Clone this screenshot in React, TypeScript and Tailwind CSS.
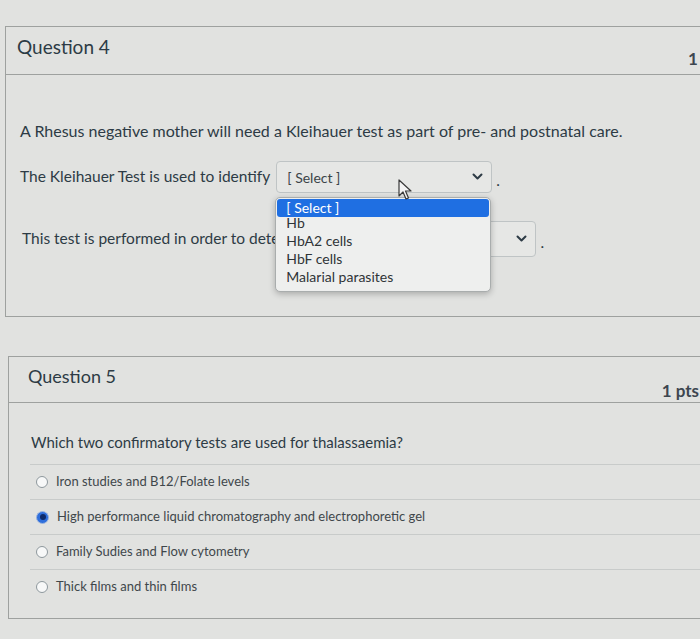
import React from "react";

const Chevron = () => (
  <svg width="11" height="8" viewBox="0 0 11 8" className="shrink-0">
    <path d="M1.5 1.5 L5.5 5.5 L9.5 1.5" fill="none" stroke="#2d3b45" strokeWidth="2" strokeLinecap="round" strokeLinejoin="round" />
  </svg>
);

const Cursor = () => (
  <svg width="16" height="22" viewBox="0 0 16 22">
    <path d="M1 1 L1 17 L5 13 L8 20 L10.5 19 L7.5 12 L13 12 Z" fill="#f4f4f4" stroke="#3a3a3a" strokeWidth="1.2" strokeLinejoin="round" />
  </svg>
);

const Radio = ({ checked }: { checked?: boolean }) =>
  checked ? (
    <span className="w-[13px] h-[13px] rounded-full bg-[#2f6fdc] border border-[#9fb6dc] flex items-center justify-center shrink-0">
      <span className="w-[6px] h-[6px] rounded-full bg-[#0e2b6b]" />
    </span>
  ) : (
    <span className="w-[12px] h-[12px] rounded-full bg-[#f7f8f8] border border-[#8e989d] shrink-0" />
  );

export default function App() {
  const options = [
    { t: "Iron studies and B12/Folate levels", c: false },
    { t: "High performance liquid chromatography and electrophoretic gel", c: true },
    { t: "Family Sudies and Flow cytometry", c: false },
    { t: "Thick films and thin films", c: false },
  ];
  return (
    <div className="w-[700px] h-[639px] overflow-hidden bg-[#e1e2e0] font-['Lato','Open_Sans',sans-serif] text-[#2d3b45]">
      <div className="pt-[26px]">
        {/* Question 4 */}
        <div className="ml-[5px] w-[740px] border border-[#9ea19f]">
          <div className="h-[48px] flex justify-between border-b border-[#9ea19f] pl-[11px] pr-[8px]">
            <div className="mt-[8px] text-[19px] leading-[24px]">Question 4</div>
            <div className="self-end mb-[4px] w-[48px] text-[17px] leading-[22px] font-bold text-[#3d4650]">1 pts</div>
          </div>
          <div className="pl-[14px] pb-[59px]">
            <p className="mt-[45px] text-[16px] leading-[22px]">
              A Rhesus negative mother will need a Kleihauer test as part of pre- and postnatal care.
            </p>
            <div className="mt-[19px] flex items-center text-[15.5px]">
              <span>The Kleihauer Test is used to identify</span>
              <div className="relative ml-[6px]">
                <div className="w-[216px] h-[32px] rounded-[4px] border border-[#bfc4c5] bg-[#e6e7e5] flex items-center justify-between pl-[10px] pr-[8px]">
                  <span className="text-[14px] text-[#3b4448]">[ Select ]</span>
                  <Chevron />
                </div>
                <div className="absolute left-[-1px] top-[36px] w-[216px] z-10 rounded-[5px] border border-[#a9adad] bg-[#eeefee] shadow-[0_2px_6px_rgba(0,0,0,0.25)] text-[14px] leading-[18px] text-[#2f3437]">
                  <div className="mx-[1px] mt-[1px] rounded-[3px] bg-[#1f6fe2] text-white pl-[9px] h-[18px] flex items-center">[ Select ]</div>
                  <div className="pl-[10px] -mt-[3px]">Hb</div>
                  <div className="pl-[10px]">HbA2 cells</div>
                  <div className="pl-[10px]">HbF cells</div>
                  <div className="pl-[10px] pb-[5px]">Malarial parasites</div>
                </div>
                <div className="absolute left-[122px] top-[18px] z-20">
                  <Cursor />
                </div>
              </div>
              <span className="ml-[4px] mt-[8px]">.</span>
            </div>
            <div className="mt-[28px] flex items-center text-[15.5px]">
              <span className="ml-[2px]">This test is performed in order to determine</span>
              <div className="ml-[6px] w-[212px] h-[36px] rounded-[4px] border border-[#bfc4c5] bg-[#e6e7e5] flex items-center justify-end pr-[8px]">
                <Chevron />
              </div>
              <span className="ml-[4px] mt-[8px]">.</span>
            </div>
          </div>
        </div>

        {/* Question 5 */}
        <div className="mt-[39px] ml-[8px] w-[700px] border border-[#9ea19f] border-r-0">
          <div className="h-[46px] flex justify-between border-b border-[#9ea19f] pl-[19px] pr-[9px]">
            <div className="mt-[8px] text-[18px] leading-[22px]">Question 5</div>
            <div className="self-end mb-[1px] text-[17px] leading-[20px] font-bold text-[#3d4650]">1 pts</div>
          </div>
          <div className="pb-[14px]">
            <p className="mt-[28px] pl-[22px] text-[15px] leading-[22px]">
              Which two confirmatory tests are used for thalassaemia?
            </p>
            <div className="mt-[11px] ml-[21px]">
              {options.map((o) => (
                <div key={o.t} className="h-[35px] border-t border-[#c8cbca] flex items-center pl-[6px] gap-[8px]">
                  <Radio checked={o.c} />
                  <span className="text-[13px] text-[#3f474b]">{o.t}</span>
                </div>
              ))}
            </div>
          </div>
        </div>
      </div>
    </div>
  );
}
